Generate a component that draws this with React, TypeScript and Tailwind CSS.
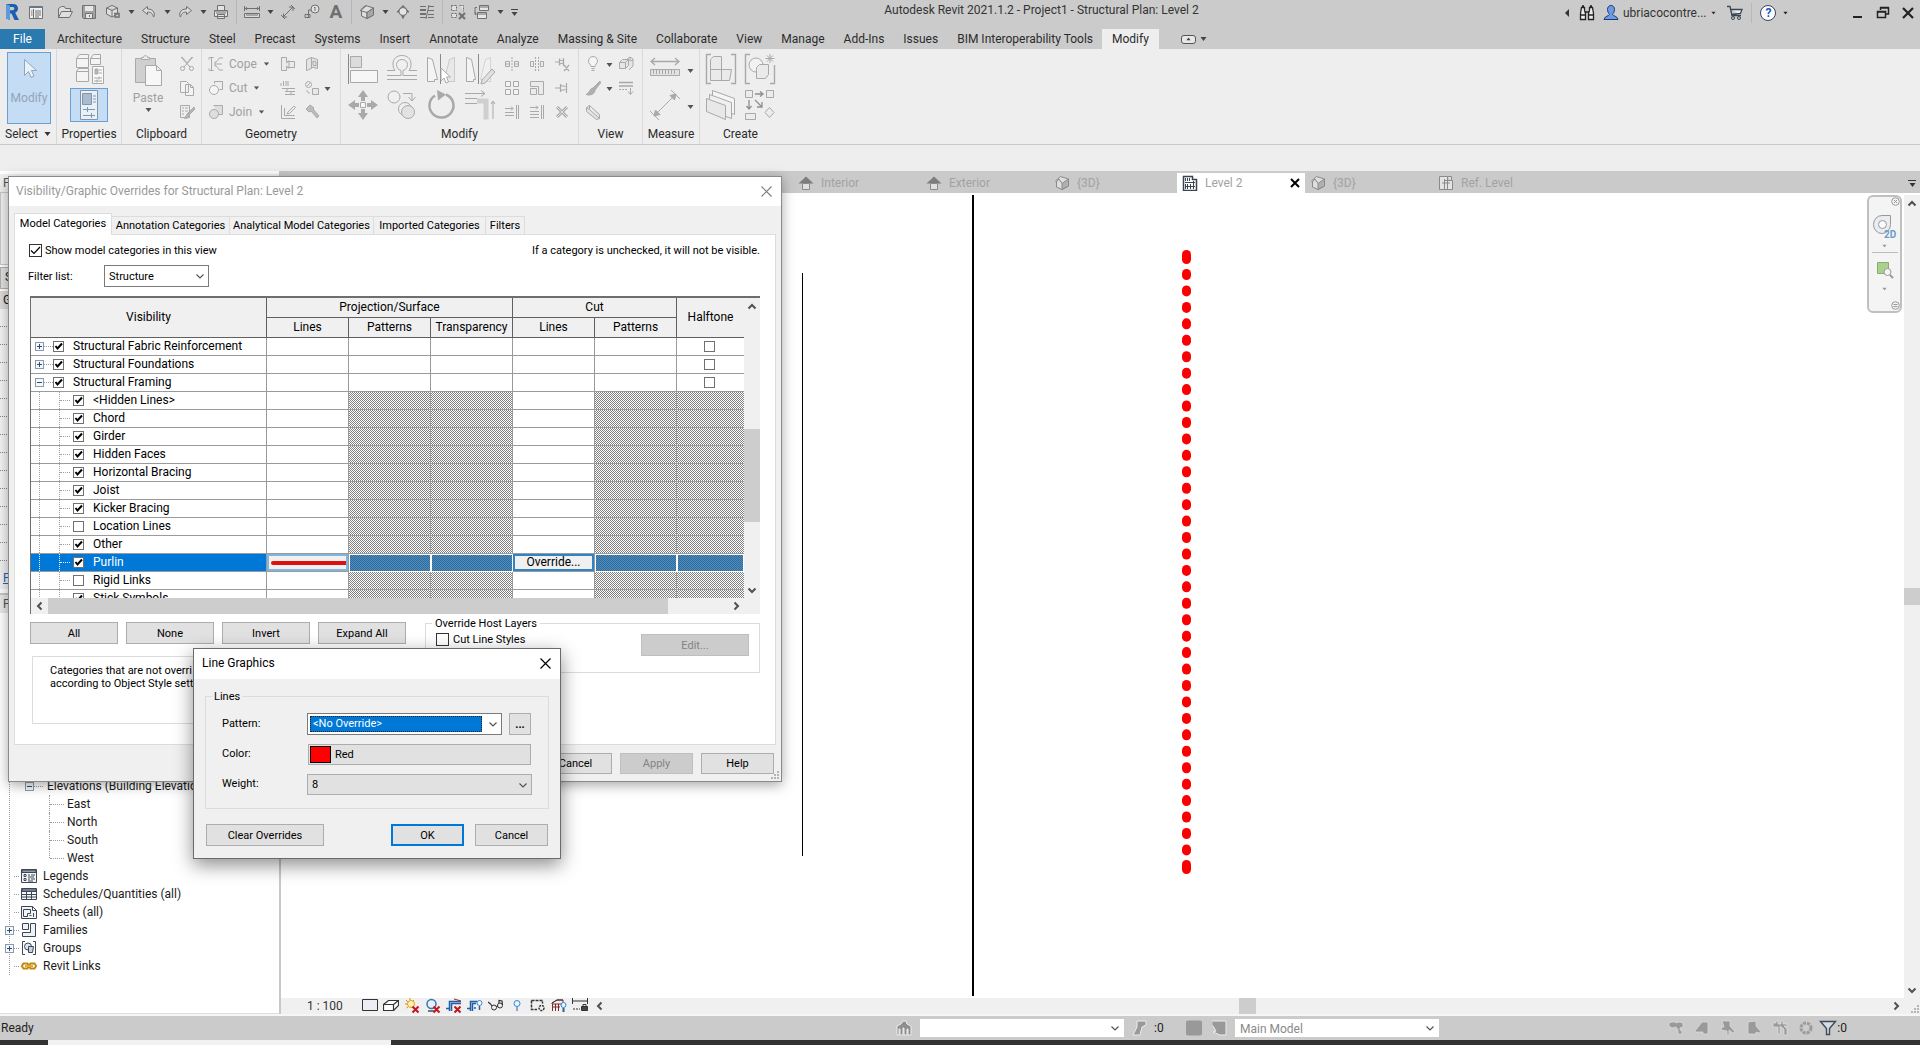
import { useState } from 'react';
import type { ReactNode } from 'react';

type IconProps = { s?: number; vb?: number; className?: string; children: ReactNode };

// Base line icon, strokes follow the text colour
function Ic({ s = 16, vb = 16, className = '', children }: IconProps) {
  return (
    <svg
      width={s}
      height={s}
      viewBox={`0 0 ${vb} ${vb}`}
      fill="none"
      stroke="currentColor"
      strokeWidth={1}
      aria-hidden="true"
      className={`shrink-0 ${className}`}
    >
      {children}
    </svg>
  );
}

function Caret({ className = '' }: { className?: string }) {
  return (
    <svg width="7" height="4" viewBox="0 0 7 4" aria-hidden="true" className={`shrink-0 ${className}`}>
      <path d="M0.5 0h6L3.5 4z" fill="currentColor" />
    </svg>
  );
}

const ARROWS = {
  up: 'M1.5 6.5L5 3l3.5 3.5',
  down: 'M1.5 3.5L5 7l3.5-3.5',
  left: 'M6.5 1.5L3 5l3.5 3.5',
  right: 'M3.5 1.5L7 5L3.5 8.5',
};

function Chevron({ dir = 'down', bold = false }: { dir?: keyof typeof ARROWS; bold?: boolean }) {
  return (
    <svg width="10" height="10" viewBox="0 0 10 10" fill="none" stroke="#505050" strokeWidth={bold ? 2 : 1.1} aria-hidden="true" className="shrink-0">
      <path d={ARROWS[dir]} />
    </svg>
  );
}

/* ---------- Title bar ---------- */

const QAT: Record<string, ReactNode> = {
  logo: (
    <Ic s={18} vb={18}>
      <path d="M3 1h7c3.500 0 5 1.800 5 4.500 0 2-1 3.500-2.800 4.200L16 17h-4.500L8.500 10.500H7V17l-4-1.500z" fill="#1b5fae" stroke="none" />
      <path d="M3 1l4 1.500V17l-4-1.500z" fill="#5b9bdc" stroke="none" />
      <path d="M7 4h2.500c1.200 0 1.800.6 1.800 1.600S10.700 7.300 9.500 7.300H7z" fill="#cbcbcb" stroke="none" />
    </Ic>
  ),
  props: (
    <Ic>
      <path d="M1.500 2.500h13v12h-13z" fill="#efefef" />
      <path d="M1.500 3.500h13M5.500 5v9.500M3 7h1.500M3 9h1.500M3 11h1.500M7 7h6M7 9h6M7 11h6M7 13h4" />
      <path d="M2 2h12v2H2z" fill="#6b7683" stroke="none" />
    </Ic>
  ),
  open: (
    <Ic>
      <path d="M1.500 13.500v-9l3-2h3l1 2h5v3M1.500 13.500l3-6h11l-3 6z" fill="#dedede" />
    </Ic>
  ),
  save: (
    <Ic>
      <path d="M1.500 1.500h13v13h-12l-1-1z" fill="#a2a2a2" />
      <path d="M4 2h8v5H4z" fill="#e6e6e6" stroke="none" />
      <path d="M4.500 14V9.500h7V14M8.500 11v2" fill="#e6e6e6" />
    </Ic>
  ),
  sync: (
    <Ic>
      <path d="M7 1.500l5.500 2.500v6L7 13 1.500 10V4zM1.500 4L7 6.500 12.500 4M7 6.500V13" fill="#dedede" />
      <path d="M9 9.500h5v2.500M15 13h-5v-2.500" strokeWidth="1.500" />
    </Ic>
  ),
  undo: (
    <Ic>
      <path d="M6.500 2.500L1.500 6.500l5 4V8c3 0 5 1 6 5 .8-1 1-2.500.6-4C12.400 6.400 10 5 6.500 5z" fill="#dcdcdc" />
    </Ic>
  ),
  redo: (
    <Ic>
      <path d="M9.500 2.500l5 4-5 4V8c-3 0-5 1-6 5-.8-1-1-2.500-.6-4C3.600 6.400 6 5 9.500 5z" fill="#dcdcdc" />
    </Ic>
  ),
  print: (
    <Ic>
      <path d="M4.500 6V1.500h7V6M1.500 6.500h13v6h-13zM4.500 10.500h7v4h-7z" fill="#e2e2e2" />
      <path d="M2 7h12M3 9h10" />
    </Ic>
  ),
  measure: (
    <Ic>
      <path d="M.5 2v5M15.500 2v5M1 4.500h14M3 3L1.500 4.500 3 6M13 3l1.500 1.500L13 6" />
      <path d="M.5 9.500h15v4H.5zM3 10v2M5 10v2M7 10v2M9 10v2M11 10v2M13 10v2" fill="#dcdcdc" />
    </Ic>
  ),
  dim: (
    <Ic>
      <path d="M3 13L13 3M1 11l4 4M11 1l4 4M3.500 9.500V13H7M9 3h4v4" />
    </Ic>
  ),
  tag: (
    <Ic>
      <circle cx="11" cy="5" r="4" fill="#e2e2e2" />
      <path d="M11 3v4M10 4l1-1M7 6H4.500v7M1 10.500h5v3H1z" />
    </Ic>
  ),
  text: <span className="text-[19px] leading-5 font-bold text-[#6f6f6f]">A</span>,
  house: (
    <Ic>
      <path d="M1.500 6l5-4.500L14.500 4v7L8 14.500 2.500 12V7zM8 14.500V8.500L14.500 4M2.500 7L8 8.500M1 7l6-5" fill="#dedede" />
      <path d="M8 8.500L14.500 4v7L8 14.500z" fill="#a8a8a8" />
    </Ic>
  ),
  section: (
    <Ic>
      <path d="M2 8l6-6.500L14 8h-3L8 14.500 5 8z" fill="#666" />
      <circle cx="8" cy="7.500" r="4" fill="#e4e4e4" />
    </Ic>
  ),
  thin: (
    <Ic>
      <path d="M1 2.500h6M1 13.500h6" />
      <path d="M1 6h6M1 10h6" strokeWidth="2" />
      <path d="M9 2.500h6M9 6.500h6M9 10.500h6M9 13.500h6M10 1L7 15" />
    </Ic>
  ),
  closeHidden: (
    <Ic>
      <path d="M1.500 1.500h5v5h-5zM9.500 1.500h4v6M1.500 9.500h5v4h-5z" fill="#e0e0e0" strokeDasharray="2 1" />
      <path d="M9 9l6 6M15 9l-6 6" strokeWidth="2" />
    </Ic>
  ),
  switchWin: (
    <Ic>
      <path d="M5.500 1.500h9v5h-9zM3.500 8.500h9v6h-9z" fill="#e6e6e6" />
      <path d="M5.500 3h9M3.500 10h9M3 3.500H1v7h1M1 8l1.500 2.500" />
    </Ic>
  ),
};

// '-' is a divider, 'v' is a drop-down caret
const QAT_ITEMS = [
  'open', 'save', 'sync', 'v', 'undo', 'v', 'redo', 'v', 'print', '-', 'measure', 'v', 'dim', 'tag', 'text', '-',
  'house', 'v', 'section', 'thin', '-', 'closeHidden', 'switchWin', 'v',
];

function QatButton({ name }: { name: string }) {
  return (
    <button aria-label={name} className="flex w-6 items-center justify-center">
      {QAT[name]}
    </button>
  );
}

function TitleBar() {
  return (
    <header className="flex h-[29px] items-stretch bg-[#cbcbcb] text-[#707070]">
      <div className="flex h-6 w-[527px] shrink-0 items-stretch">
        <QatButton name="logo" />
        <QatButton name="props" />
        <span className="w-[5px]" />
        {QAT_ITEMS.map((item, i) => {
          if (item === 'v') {
            return (
              <button key={i} aria-label="More" className="flex w-3 items-center justify-center text-[#444]">
                <Caret />
              </button>
            );
          }
          if (item === '-') {
            return <span key={i} className="ml-[3px] w-1 border-l border-[#b5b5b5]" />;
          }
          return <QatButton key={i} name={item} />;
        })}
        <button aria-label="Customize" className="flex w-4 flex-col items-center justify-center gap-[2px] text-[#444]">
          <span className="h-px w-[7px] bg-[#444]" />
          <Caret />
        </button>
      </div>
      <h1 className="flex-1 pt-[2px] text-center text-[12px] leading-4 text-[#333]">
        Autodesk Revit 2021.1.2 - Project1 - Structural Plan: Level 2
      </h1>
      <div className="flex h-[25px] w-[364px] shrink-0 items-center pl-[9px] text-[#222]">
        <svg width="4" height="8" viewBox="0 0 4 8" aria-hidden="true"><path d="M4 0v8L0 4z" fill="#333" /></svg>
        <button aria-label="Search" className="ml-[10px]">
          <Ic>
            <path d="M2.500 2.500h3v3l1 3v6h-5v-6zM10.500 2.500h3l1 6v6h-5v-6l1-3zM6.500 7h3M1.500 10h5M9.500 10h5M3 1h2M11 1h2" fill="#ececec" strokeWidth="1.300" />
          </Ic>
        </button>
        <button className="ml-2 flex items-center text-[12px] text-[#333]">
          <Ic className="text-[#1d3b6e]">
            <path d="M8 .5c2.500 0 3.500 2 3.500 4S10 9 9.500 9.500c.3 1.500 5 1.500 5.500 5H1c.5-3.500 5.200-3.500 5.500-5C6 9 4.500 6.500 4.500 4.500s1-4 3.500-4z" fill="#6e9be8" />
          </Ic>
          <span className="ml-1">ubriacocontre...</span>
          <Caret className="ml-1 scale-75" />
        </button>
        <button aria-label="App store" className="ml-[10px]">
          <Ic className="text-[#3a4552]">
            <path d="M0 1.500h3l2 9h9M3.500 4.500h11.500l-1.500 4-9 1" fill="#e6ebf2" strokeWidth="1.300" />
            <circle cx="6" cy="13" r="1.500" />
            <circle cx="12" cy="13" r="1.500" />
          </Ic>
        </button>
        <span className="ml-2 h-5 border-l border-[#b8b8b8]" />
        <button aria-label="Help" className="ml-2 flex size-4 items-center justify-center rounded-full border border-[#34435c] bg-white text-[12px] leading-3 font-bold text-[#1a56c4]">?</button>
        <Caret className="ml-[6px] scale-75" />
        <span className="flex-1" />
        <button aria-label="Minimize" className="flex size-[26px] items-center justify-center pt-2"><span className="h-[2px] w-[9px] bg-[#222]" /></button>
        <button aria-label="Restore" className="flex size-[26px] items-center justify-center">
          <Ic s={14} vb={14}>
            <path d="M4.500 4V2h8v6H10M4 1.500h9" strokeWidth="1.500" />
            <path d="M1.500 5.500h8v6h-8zM1 6h9" strokeWidth="1.500" />
          </Ic>
        </button>
        <button aria-label="Close" className="flex size-6 items-center justify-center">
          <Ic s={12} vb={12}><path d="M1 1l10 10M11 1L1 11" strokeWidth="2.200" /></Ic>
        </button>
      </div>
    </header>
  );
}

const RIBBON_TABS = [
  'Architecture', 'Structure', 'Steel', 'Precast', 'Systems', 'Insert', 'Annotate', 'Analyze', 'Massing & Site',
  'Collaborate', 'View', 'Manage', 'Add-Ins', 'Issues', 'BIM Interoperability Tools',
];

function RibbonTabs() {
  return (
    <nav className="flex h-5 items-stretch bg-[#cbcbcb] text-[12px] text-[#2b2b2b]">
      <button className="mr-[2px] w-[45px] bg-[#2a7ab0] text-white">File</button>
      {RIBBON_TABS.map((tab) => (
        <button key={tab} className="pr-[9px] pl-[10px] whitespace-nowrap">{tab}</button>
      ))}
      <button className="bg-[#eeeeee] px-[10px]">Modify</button>
      <button aria-label="Ribbon display" className="ml-[22px] flex items-center gap-1 text-[#444]">
        <span className="flex h-[9px] w-[15px] items-center justify-center rounded-[3px] border border-[#555] bg-[#e8e8e8]">
          <Caret className="scale-75 rotate-180" />
        </span>
        <Caret />
      </button>
    </nav>
  );
}

/* ---------- Ribbon ---------- */

const SMALL: Record<string, ReactNode> = {
  scissors: (
    <Ic>
      <path d="M2 1l9 10M14 1L5 11M3 1l5 6M13 1L8 7" />
      <circle cx="3.500" cy="12.500" r="2" />
      <circle cx="12.500" cy="12.500" r="2" />
    </Ic>
  ),
  copy: <Ic><path d="M1.500 1.500h6l2 2v9h-8zM6.500 4.500h5l3 3v8h-8zM11.500 4.500v3h3" fill="#f3f3f3" /></Ic>,
  match: (
    <Ic>
      <path d="M1.500 1.500h9v12h-9zM3 4h2M6 4h3M3 7h2M6 7h3M3 10h2" />
      <path d="M15 3L9 9l1.500 1.500L16 5zM9 9c-2 1-1 4-4 5 3 1 5.500-.5 5.500-3.500z" fill="#b5b5b5" />
    </Ic>
  ),
  cope: <Ic><path d="M1.500 1.500h4M1.500 14.500h4M3.500 1.500v13M1 1.500v2M1 12.500v2M15 2h-3c-3 0-1 4-5 4v4c4 0 2 4 5 4h3M7 8h7" /></Ic>,
  cut: <Ic><path d="M6.500 1.500h8v8h-3M6.500 1.500v2" fill="#ededed" /><circle cx="6" cy="10" r="4.500" fill="#f5f5f5" /></Ic>,
  join: <Ic><path d="M5.500 1.500h9v9h-5" fill="#dedede" /><circle cx="6" cy="10" r="4.500" fill="#dedede" /></Ic>,
  wallJoin: <Ic><path d="M1.500 1.500h5v4h8v6h-8v3h-5zM9 4.500v8M6 7l3-2M6 10l3 2" fill="#ebebeb" /></Ic>,
  beam: <Ic><path d="M1 3v3M3.500 1v5M6 1v5M8 1v5M2 8.500h13M5 11.500h10M5 14.500h10M7 8.500v3M11 11.500v3" /></Ic>,
  demolish: <Ic><path d="M1.500 1v13.500H15M4.500 4v7.500h10M8 8l6-6 1.500 1.500-6 6L7 10z" /></Ic>,
  unjoin: <Ic><path d="M2.500 3.500l5-2v11l-5 2zM7.500 1.500l6 2v9l-6-1.500M9 5l3 1v4l-3-1z" fill="#e4e4e4" /></Ic>,
  splitFace: <Ic><circle cx="4.500" cy="4.500" r="3" /><path d="M3 6l3-3M8.500 8.500h6v6h-6zM3 10c0 2 1 3 3 3" fill="#e8e8e8" /></Ic>,
  hammer: <Ic><path d="M2 5l4-4 4 3-1 1 6 7-2 2-6-7-2 1z" fill="#bdbdbd" /></Ic>,
  split: <Ic><path d="M8 1v14" strokeDasharray="2 1" /><path d="M1.500 5.500h4v5h-4zM10.500 5.500h4v5h-4zM1 8h5M10 8h5" /></Ic>,
  splitGap: <Ic><path d="M6.500 1v14M9.500 1v14" strokeDasharray="2 1" /><path d="M1.500 5.500h3v5h-3zM11.500 5.500h3v5h-3z" /></Ic>,
  unpin: <Ic><path d="M1 6h4M5.500 2.500v7M5.500 4l4 1M5.500 8l4-1M9.500 2v8M10 9l5 6M15 9l-5 6" strokeWidth="1.200" /></Ic>,
  array: <Ic><path d="M1.500 1.500h5v5h-5zM9.500 1.500h5v5h-5zM1.500 9.500h5v5h-5zM9.500 9.500h5v5h-5z" fill="#f3f3f3" /></Ic>,
  scale: <Ic><path d="M1.500 1.500h13v13h-5v-8h-8zM1.500 8.500h6v6h-6z" fill="#ebebeb" /></Ic>,
  pin: <Ic><path d="M1 8h5M6.500 4v8M6.500 5.500l5 1M6.500 10.500l5-1M12.500 3v10" strokeWidth="1.200" /></Ic>,
  trim1: <Ic><path d="M1 4.500h8M7 2.500l2 2-2 2M1 8.500h9M1 11.500h9M12.500 1v14M14.500 1v14" /></Ic>,
  trim2: <Ic><path d="M1 3.500h8M7 1.500l2 2-2 2M1 7.500h9M1 10.500h9M1 13.500h9M12.500 1v14M14.500 1v14" /></Ic>,
  del: <Ic><path d="M3 3l10 10M13 3L3 13" strokeWidth="3" /><path d="M3 3l10 10M13 3L3 13" stroke="#e3e3e3" /></Ic>,
  bulb: <Ic><path d="M6 10.500c0-2-2.500-3-2.500-5.500a4.500 4.500 0 019 0c0 2.500-2.500 3.500-2.500 5.500zM6.500 12.500h3M6.500 14.500h3" fill="#f5f5f5" /></Ic>,
  boxView: <Ic><path d="M1.500 6.500h6v6h-6zM1.500 6.500l3-3h6v6l-3 3M7.500 6.500l3-3M8 4l4-3 3 2v7l-4 4M12 1v4l3-1" fill="#e6e6e6" /></Ic>,
  brush: <Ic><path d="M15 1L8 8l2 2 5.500-7zM8 8c-4 1-3 5-7 6.500C5 16 10 14 10 10z" fill="#b0b0b0" /></Ic>,
  lines: <Ic><path d="M1 2.500h14M1 6h14" strokeWidth="1.600" /><path d="M1 9.500h9" strokeDasharray="2 1" /><path d="M12.500 8v6M10 11.500l2.500 3 2.500-3" /></Ic>,
  wall: <Ic><path d="M1.500 3.500l3-2 10 9v4l-3 1-10-8zM4.500 1.500v4l10 9M1.500 3.500l3 2" fill="#e2e2e2" /></Ic>,
};

const LARGE: Record<string, ReactNode> = {
  propsTop: (
    <Ic s={32} vb={32}>
      <path d="M3.500 5.500l3-4h9v13h-12zM17.500 5.500l3-4h7v10h-10zM3.500 18.500l2-3h10v13h-12z" fill="#f4f4f4" />
      <path d="M3.500 5.500h12M17.500 5.500h10M3.500 18.500h12" />
      <path d="M19.500 13.500h11v17h-11z" fill="#fafafa" />
      <path d="M22 16h3v5h-3z" fill="#b5b5b5" />
      <path d="M26 17h3M26 20h3M21 25h8M21 28h8M26 23.500v3M24 26.500v3" />
    </Ic>
  ),
  propsBtn: (
    <Ic s={32} vb={32} className="text-[#8296ab]">
      <path d="M7.500 1.500h17v29h-17z" fill="#e8f0f8" />
      <path d="M9.500 4.500h9v11h-9z" fill="#a9bccf" />
      <path d="M20 7h3M20 10h3M20 13h3M10 20.500h12M10 26.500h12M14.500 18v5M18.500 24v5" />
    </Ic>
  ),
  paste: (
    <Ic s={32} vb={32}>
      <path d="M3.500 4.500h20v24h-20z" fill="#d0d0d0" />
      <path d="M9.500 5.500v-2h2c0-2.500 4-2.500 4 0h2v2z" fill="#eee" />
      <path d="M13.500 11.500h11l5 5v15h-16zM24.500 11.500v5h5" fill="#f7f7f7" />
    </Ic>
  ),
  align: (
    <Ic s={32} vb={32}>
      <path d="M1.500 1v30" stroke="#8a8a8a" />
      <path d="M3.500 3.500h11v11h-11z" fill="#dcdcdc" />
      <path d="M3.500 17.500h27v12h-27z" fill="#f6f6f6" />
    </Ic>
  ),
  offset: (
    <Ic s={32} vb={32}>
      <path d="M1 17.500h8c-1.500-2-2-4-2-6.500C7 5.500 11 2.500 16 2.500s9 3 9 8.500c0 2.500-.5 4.500-2 6.500h8v9H1z" fill="#f0f0f0" stroke="none" />
      <path d="M1 17.500h8c-1.500-2-2-4-2-6.500C7 5.500 11 2.500 16 2.500s9 3 9 8.500c0 2.500-.5 4.500-2 6.500h8" />
      <path d="M1 22.500h14v-5c-3-1-4.500-3-4.500-6s2.500-5 5.500-5 5.500 2 5.500 5-1.500 5-4.500 6v5h14M1 26.500h30" />
    </Ic>
  ),
  mirrorPick: (
    <Ic s={32} vb={32}>
      <path d="M2.500 4.500l5 2 5 20h-3v2h-7z" fill="#f4f4f4" />
      <path d="M29.500 4.500l-5 2-5 20h3v2h7z" fill="#e8e8e8" strokeOpacity=".5" />
      <path d="M15.500 1v30" stroke="#8a8a8a" />
      <path d="M16 15v13l3-3 2 5 2.500-1-2-5h4z" fill="#fff" />
    </Ic>
  ),
  mirrorDraw: (
    <Ic s={32} vb={32}>
      <path d="M2.500 4.500l5 2 4 20h-2v2h-7z" fill="#f4f4f4" />
      <path d="M26.500 4.500l-5 2-5 20h3v2h7z" fill="#f0f0f0" strokeOpacity=".4" />
      <path d="M14.500 1v30" stroke="#8a8a8a" />
      <path d="M28 16l3 3-10 11-4 1 1-4z" fill="#e0e0e0" />
    </Ic>
  ),
  move: (
    <Ic s={32} vb={32}>
      <path d="M16 1l5 7h-3v4h-4V8h-3zM16 31l5-7h-3v-4h-4v4h-3zM1 16l7-5v3h4v4H8v3zM31 16l-7-5v3h-4v4h4v3z" fill="#a9a9a9" stroke="none" />
      <path d="M13.500 13.500h5v5h-5z" fill="#f6f6f6" />
    </Ic>
  ),
  copyBig: (
    <Ic s={32} vb={32}>
      <circle cx="8" cy="8" r="6" fill="#f0f0f0" />
      <circle cx="19" cy="20" r="6.500" fill="#f0f0f0" />
      <circle cx="22" cy="23" r="6.500" fill="#e2e2e2" />
      <path d="M17 4.500h9v7M22.500 8l3.500 4 3.500-4" />
    </Ic>
  ),
  rotate: (
    <Ic s={32} vb={32}>
      <path d="M10 6.500a12 12 0 1011-1" strokeWidth="2.500" />
      <path d="M12 1l9 4.500-8 6z" fill="#a9a9a9" stroke="none" />
    </Ic>
  ),
  trimCorner: (
    <Ic s={32} vb={32}>
      <path d="M1 4.500h20M17 1.500l4 3-4 3" />
      <path d="M1 9.500h12M1 14.500h12" />
      <path d="M13 9.500h11.500v21h-5v-16h-6.500z" fill="#cfcfcf" stroke="none" />
      <path d="M29 30V12M27 15l2-3 2 3" />
    </Ic>
  ),
  ruler: (
    <Ic s={32} vb={32}>
      <path d="M2 8.500h28M6 5L2 8.500 6 12M26 5l4 3.500L26 12" strokeWidth="1.300" />
      <path d="M1.500 16.500h29v6h-29zM4.500 17v4M7.500 17v4M10.500 17v4M13.500 17v4M16.500 17v4M19.500 17v4M22.500 17v4M25.500 17v4" fill="#e2e2e2" />
    </Ic>
  ),
  dimBig: (
    <Ic s={32} vb={32}>
      <path d="M5 27L27 5M1 22l9 9M22 1l9 9" />
      <path d="M27 5l-1.500 6L21 6.500zM5 27l1.500-6L11 25.500z" fill="#a9a9a9" />
    </Ic>
  ),
  assembly: (
    <Ic s={32} vb={32}>
      <path d="M6 1.500H1.500v29H6M26 1.500h4.500v29H26" strokeWidth="1.400" />
      <path d="M5.500 6.500l3-3h8v13h10l-2 11h-19zM5.500 16.500h11M16.500 16.500v11" fill="#eaeaea" />
    </Ic>
  ),
  group: (
    <Ic s={32} vb={32}>
      <path d="M6 1.500H1.500v29H6M26 30.500h4.500V12" strokeWidth="1.400" />
      <circle cx="12" cy="12" r="7" fill="#f2f2f2" />
      <path d="M12.500 14.500l3-3h9v10l-3 4h-9zM26 1v9M21.500 5.500h9M23 2.500l6 6M29 2.500l-6 6" fill="#eaeaea" />
    </Ic>
  ),
  parts: (
    <Ic s={32} vb={32}>
      <path d="M7.500 1.500l22 8v16l-22-8z" fill="#f5f5f5" />
      <path d="M4.500 5.500l22 8v16l-22-8z" fill="#efefef" />
      <path d="M1.500 9.500l19 7v14l-19-8z" fill="#e8e8e8" />
    </Ic>
  ),
  similar: (
    <Ic s={32} vb={32}>
      <path d="M1.500 1.500h7v7h-7zM22.500 1.500h7v7h-7zM1.500 24.500h10v6h-10zM25.500 18.500l4.500 5-4.500 5-4.500-5z" fill="#ececec" />
      <path d="M11 5h8M16 2.500L19 5l-3 2.500M5 11v9M2.500 17L5 20l2.500-3M11 11l7 7M18 13v5h-5" stroke="#8f8f8f" strokeWidth="1.300" />
    </Ic>
  ),
};

function SmallGrid({ items, cols }: { items: string[]; cols: string }) {
  return (
    <div className={`grid auto-rows-[24px] content-start pt-[3px] ${cols}`}>
      {items.map((item) => (
        <button key={item} aria-label={item} className="flex items-center justify-center">{SMALL[item]}</button>
      ))}
    </div>
  );
}

function LargeGrid({ items, cols }: { items: string[]; cols: string }) {
  return (
    <div className={`grid auto-rows-[36px] content-start pt-[2px] ${cols}`}>
      {items.map((item) => (
        <button key={item} aria-label={item} className="flex items-center justify-center">{LARGE[item]}</button>
      ))}
    </div>
  );
}

function Panel({ title, width, children }: { title: ReactNode; width: string; children: ReactNode }) {
  return (
    <section className={`flex shrink-0 flex-col border-r border-[#d9d9d9] ${width}`}>
      <div className="flex h-[77px] text-[#a9a9a9]">{children}</div>
      <h2 className="flex items-center justify-center gap-[6px] text-[12px] leading-4 text-[#2b2b2b]">{title}</h2>
    </section>
  );
}

function GeometryTool({ icon, label }: { icon: string; label: string }) {
  return (
    <button className="flex h-6 items-center text-[12px] text-[#a0a0a0]">
      <span className="text-[#a9a9a9]">{SMALL[icon]}</span>
      <span className="mr-[6px] ml-[5px]">{label}</span>
      <Caret className="scale-90 text-[#555]" />
    </button>
  );
}

function Ribbon() {
  return (
    <div className="flex h-24 border-b border-[#c9c9c9] bg-[#eeeeee]">
      <Panel width="w-[57px]" title={<>Select <Caret className="text-[#333]" /></>}>
        <button className="mt-[3px] ml-[7px] flex h-[72px] w-[44px] flex-col items-center border border-[#6a9fd4] bg-[#c4dcf4] pt-1 text-[12px] text-[#93a5b8]">
          <Ic s={24} vb={24}>
            <path d="M7.500 2.500v16l4-4 2.500 6 3-1.500-2.500-5.500h5z" fill="#e9f2fb" />
          </Ic>
          <span className="mt-2">Modify</span>
        </button>
      </Panel>
      <Panel width="w-[65px]" title="Properties">
        <div className="flex w-full flex-col items-center gap-[3px] pt-1">
          <button aria-label="Type properties">{LARGE.propsTop}</button>
          <button aria-label="Properties" className="flex h-[34px] w-[38px] items-center justify-center border border-[#6a9fd4] bg-[#c4dcf4]">{LARGE.propsBtn}</button>
        </div>
      </Panel>
      <Panel width="w-[80px]" title="Clipboard">
        <button className="flex w-[52px] flex-col items-center pt-[5px] text-[12px] text-[#a0a0a0]">
          <span className="text-[#a9a9a9]">{LARGE.paste}</span>
          <span className="mt-1 leading-4">Paste</span>
          <Caret className="mt-[2px] text-[#555]" />
        </button>
        <SmallGrid cols="grid-cols-[26px]" items={['scissors', 'copy', 'match']} />
      </Panel>
      <Panel width="w-[139px]" title="Geometry">
        <div className="w-[74px] pt-[3px] pl-[6px]">
          <GeometryTool icon="cope" label="Cope" />
          <GeometryTool icon="cut" label="Cut" />
          <GeometryTool icon="join" label="Join" />
        </div>
        <SmallGrid cols="grid-cols-[24px_24px]" items={['wallJoin', 'unjoin', 'beam', 'splitFace', 'demolish', 'hammer']} />
        <Caret className="mt-[38px] text-[#555]" />
      </Panel>
      <Panel width="w-[238px]" title="Modify">
        <LargeGrid cols="grid-cols-[39px_39px_39px_39px] pl-[2px]" items={['align', 'offset', 'mirrorPick', 'mirrorDraw', 'move', 'copyBig', 'rotate', 'trimCorner']} />
        <SmallGrid cols="grid-cols-[25px_25px_25px]" items={['split', 'splitGap', 'unpin', 'array', 'scale', 'pin', 'trim1', 'trim2', 'del']} />
      </Panel>
      <Panel width="w-16" title="View">
        <SmallGrid cols="grid-cols-[26px] pl-px" items={['bulb', 'brush', 'wall']} />
        <div className="flex flex-col gap-5 pt-[14px] text-[#555]">
          <Caret />
          <Caret />
        </div>
        <SmallGrid cols="grid-cols-[25px]" items={['boxView', 'lines']} />
      </Panel>
      <Panel width="w-[57px]" title="Measure">
        <LargeGrid cols="grid-cols-[44px]" items={['ruler', 'dimBig']} />
        <div className="flex flex-col gap-8 pt-5 text-[#555]">
          <Caret />
          <Caret />
        </div>
      </Panel>
      <Panel width="w-[82px] border-transparent" title="Create">
        <LargeGrid cols="grid-cols-[39px_39px] pl-px" items={['assembly', 'group', 'parts', 'similar']} />
      </Panel>
    </div>
  );
}

/* ---------- Left palettes ---------- */

function ExpandBox({ open = false }: { open?: boolean }) {
  return (
    <svg width="9" height="9" viewBox="0 0 9 9" aria-hidden="true" className="relative shrink-0">
      <rect x=".5" y=".5" width="8" height="8" fill="#f4f7fb" stroke="#8c9aa8" />
      <path d={open ? 'M2 4.500h5' : 'M2 4.500h5M4.500 2v5'} stroke="#2c4a7c" />
    </svg>
  );
}

const TREE_ICONS: Record<string, ReactNode> = {
  Legends: (
    <Ic>
      <path d="M.5 1.500h15v13H.5z" fill="#f2f5f8" />
      <path d="M1 2h14v2.500H1z" fill="#8d99a6" />
      <path d="M3 6.500h2v2H3zM3 10.500h2v2H3zM7 7h2M10 7h4M7 9h6M7 11h2M10 11h4M7 13h5" />
    </Ic>
  ),
  'Schedules/Quantities (all)': (
    <Ic>
      <path d="M.5 2.500h15v11H.5z" fill="#f5f7fa" />
      <path d="M1 3h14v2H1z" fill="#aab4bf" />
      <path d="M.5 5.500h15M.5 8.500h15M.5 11h15M5.500 5v8.500M10.500 5v8.500" />
    </Ic>
  ),
  'Sheets (all)': (
    <Ic>
      <path d="M.5 2.500h11l4 4v8H.5zM11.500 2.500v4h4" fill="#f2f5f8" />
      <path d="M2.500 5.500h7v4h-3v3h-4zM8.500 11.500h2M12.500 9v4" />
    </Ic>
  ),
  Families: <Ic><path d="M1.500 1.500h6v6h-6zM9.500 1.500h5v13h-13v-4h8z" fill="#eef1f5" /></Ic>,
  Groups: (
    <Ic>
      <path d="M4 1.500H1.500v13H4M12 1.500h2.500v13H12" />
      <circle cx="7" cy="6.500" r="3.500" fill="#dfe6ee" />
      <path d="M7.500 6.500h5l-1 6h-4z" fill="#c8d2dd" />
    </Ic>
  ),
  'Revit Links': (
    <Ic className="text-[#c08a10]">
      <path d="M2.500 5.500h4l1.500 2.500-1.500 2.500h-4L.8 8zM9.500 5.500h4L15.200 8l-1.700 2.500h-4L8 8zM4 8h8" strokeWidth="2" />
      <path d="M4 8h8" stroke="#f5d15a" />
    </Ic>
  ),
};

const TREE_ROOTS = [
  { label: 'Legends' },
  { label: 'Schedules/Quantities (all)' },
  { label: 'Sheets (all)' },
  { label: 'Families', box: true },
  { label: 'Groups', box: true },
  { label: 'Revit Links' },
];

// Only the outer edge of the Properties palette stays clear of the open dialog
function LeftPalettes() {
  return (
    <aside className="flex w-[281px] shrink-0 flex-col border-r-2 border-[#c8c8c8] bg-white text-[12px] leading-[18px] text-[#1a1a1a]">
      <h2 title="Properties" className="mt-[3px] h-[18px] bg-[#f0f0f0] pl-[3px] text-[#555]">P</h2>
      <div className="h-[73px] border border-[#c8c8c8] bg-[#f0f0f0]" />
      <div title="Structural Plan" className="mt-[2px] h-[22px] border border-[#b0b0b0] bg-[#e1e1e1] pl-1">S</div>
      <div title="Graphics" className="mt-[2px] h-[18px] bg-[#dcdcdc] pl-[3px]">G</div>
      {Array.from({ length: 14 }, (_, i) => (
        <div key={i} className="h-[18px] border-b border-dotted border-[#888] bg-[#f5f5f5]" />
      ))}
      <div className="h-7 bg-[#f0f0f0] pt-2 pl-[3px]"><a href="#help" title="Properties help" className="text-[#2d5fb3] underline">P</a></div>
      <div title="Project Browser" className="mt-1 h-5 border-t-2 border-[#c8c8c8] bg-[#e8e8e8] pl-[3px] text-[#555]">P</div>
      <ul className="relative flex-1 border-b border-[#dedede] pl-px">
        <li className="h-[164px]" />
        <li aria-hidden="true" className="absolute top-2 bottom-[38px] left-[9px] border-l border-dotted border-[#9a9a9a]" />
        <li className="flex h-[18px] items-center pl-6">
          <ExpandBox open />
          <span className="w-[9px] border-t border-dotted border-[#9a9a9a]" />
          <span className="ml-1">Elevations (Building Elevatio</span>
        </li>
        {['East', 'North', 'South', 'West'].map((name) => (
          <li key={name} className="flex h-[18px] pl-12">
            <span className={`border-l border-dotted border-[#9a9a9a] ${name === 'West' ? 'h-[9px]' : ''}`} />
            <span className="mt-[9px] w-[14px] border-t border-dotted border-[#9a9a9a]" />
            <span className="ml-[3px]">{name}</span>
          </li>
        ))}
        {TREE_ROOTS.map(({ label, box }) => (
          <li key={label} className="flex h-[18px] items-center pl-1">
            {box ? <ExpandBox /> : <span className="w-[9px]" />}
            <span className="mr-[2px] w-[5px] border-t border-dotted border-[#9a9a9a]" />
            <span className="text-[#3c4654]">{TREE_ICONS[label]}</span>
            <span className="ml-[6px]">{label}</span>
          </li>
        ))}
      </ul>
    </aside>
  );
}

/* ---------- Drawing area ---------- */

const elevationIcon = <Ic><path d="M8 1.500L.5 8.500h15z" fill="#7d7d7d" stroke="none" /><path d="M4.500 8.500h7v6h-7z" fill="#e0e0e0" /></Ic>;
const cubeIcon = (
  <Ic>
    <path d="M1.500 6l5-4.500L14.500 4v7L8 14.500 2.500 12V7z" fill="#dedede" />
    <path d="M8 8.500L14.500 4v7L8 14.500z" fill="#b0b0b0" />
    <path d="M2.500 7L5 4l3 4.500" />
  </Ic>
);
const planIcon = (
  <Ic className="text-[#3a4552]">
    <path d="M1.500 1.500h9v3h4v11h-13z" fill="#fff" strokeWidth="1.500" />
    <path d="M3.500 3v3M5.500 3v3M7.500 3v3M3 7.500h10M3.500 9v5M5.500 9v5M8.500 9v5M11.500 6v8M3 11.500h10" />
  </Ic>
);
const refIcon = (
  <Ic>
    <path d="M1.500 1.500h8v13h-8zM6.500 5.500h8v9h-8zM9.500 1.500h4v4" fill="#e4e4e4" />
    <path d="M6.500 4v10M4 8h9" strokeDasharray="2 1" />
  </Ic>
);

const VIEW_TABS = [
  { label: 'Interior', icon: elevationIcon },
  { label: 'Exterior', icon: elevationIcon },
  { label: '{3D}', icon: cubeIcon },
  { label: 'Level 2', icon: planIcon, active: true },
  { label: '{3D}', icon: cubeIcon },
  { label: 'Ref. Level', icon: refIcon },
];

function ViewTabs() {
  return (
    <nav className="flex h-[22px] shrink-0 bg-[#cacaca] pl-[512px] text-[12px]">
      {VIEW_TABS.map((tab, i) => (
        <button
          key={i}
          className={`mt-[2px] flex w-32 shrink-0 items-center gap-[7px] pr-1 pl-[5px] text-[#a2a2a2] ${tab.active ? 'bg-white' : ''}`}
        >
          <span className="text-[#8a8a8a]">{tab.icon}</span>
          <span>{tab.label}</span>
          {tab.active && (
            <Ic s={12} vb={12} className="ml-auto text-black"><path d="M2 2l8 8M10 2l-8 8" strokeWidth="2" /></Ic>
          )}
        </button>
      ))}
      <button aria-label="Open views" className="mt-[2px] ml-auto flex w-4 flex-col items-center justify-center gap-[2px] text-[#333]">
        <span className="h-px w-2 bg-[#333]" />
        <Caret />
      </button>
    </nav>
  );
}

// Purlin symbol drawn as thick red dashes
function PurlinLine() {
  return (
    <g fill="#fa0000">
      <rect x="901" y="57" width="9" height="14" rx="4.500" />
      {Array.from({ length: 36 }, (_, i) => (
        <rect key={i} x="901" y={76 + i * 16.44} width="9" height="11" rx="4.500" />
      ))}
      <rect x="901" y="667" width="9" height="14" rx="4.500" />
    </g>
  );
}

const NAV_BOX = 'absolute top-[2px] right-[2px] flex h-[118px] w-[35px] flex-col items-center rounded-md border-2 border-[#c0c0c0] bg-[#f4f4f4] text-[#999]';

function DrawingArea() {
  return (
    <div className="relative min-w-0 flex-1 overflow-hidden">
      <svg className="absolute inset-0 h-full w-full" aria-label="Level 2 plan">
        <rect x="521" y="80" width="1" height="583" fill="#000" />
        <rect x="691" y="2" width="2" height="801" fill="#000" />
        <PurlinLine />
      </svg>
      <div className={NAV_BOX}>
        <button aria-label="Close bar" className="self-end">
          <Ic s={9} vb={9}><circle cx="4.500" cy="4.500" r="3.800" /><path d="M3 3l3 3M6 3L3 6" /></Ic>
        </button>
        <button aria-label="Steering wheel 2D" className="mt-2 flex items-end">
          <Ic s={26} vb={26}>
            <path d="M10 1.500h8.500v9a8.500 9 0 11-8.500-9z" fill="#e9ecf0" />
            <circle cx="10.500" cy="10.500" r="4" fill="#fafafa" />
            <text x="12" y="24" fontSize="10" fontWeight="bold" fill="#6b9bc9" stroke="none">2D</text>
          </Ic>
        </button>
        <Caret className="mt-1 scale-75" />
        <span className="mt-1 w-[26px] border-t border-[#bbb]" />
        <button aria-label="Zoom region" className="mt-2">
          <Ic s={18} vb={18}>
            <path d="M1.500 1.500h11v11h-11z" fill="#a9d18e" stroke="#86ad6e" />
            <circle cx="11.500" cy="11" r="3.500" fill="#f4f4f4" />
            <path d="M14 14l3 3" strokeWidth="2" />
          </Ic>
        </button>
        <Caret className="mt-2 scale-75" />
        <button aria-label="Bar options" className="mt-auto mb-px self-end">
          <Ic s={9} vb={9}><circle cx="4.500" cy="4.500" r="3.800" /><path d="M2.500 3.500h4M2.500 5.500h4" /></Ic>
        </button>
      </div>
    </div>
  );
}

function RedX() {
  return <path d="M8.500 8.500l6 6M14.500 8.500l-6 6" stroke="#c8141c" strokeWidth="2" />;
}

const VIEW_CONTROLS: [string, ReactNode][] = [
  ['Detail level', <Ic><path d="M.5 1.500h15v11H.5z" fill="#eceef3" /></Ic>],
  ['Visual style', <Ic><path d="M.5 6.500h10v6H.5zM.5 6.500l5-4h10v5l-5 5M10.500 6.500l5-4" fill="#fff" strokeWidth="1.200" /></Ic>],
  ['Sun path', <Ic><path d="M6 0v2M1 6h2M2 2l2 2M10 2L9 3M2.500 10L4 9" stroke="#d98b00" /><circle cx="7" cy="6" r="3.500" fill="#fff3c4" stroke="#e0a010" /><RedX /></Ic>],
  ['Shadows', <Ic><circle cx="6.500" cy="6" r="4.500" fill="#e8f1fa" stroke="#2f78b5" strokeWidth="1.500" /><path d="M3 13h6" strokeWidth="2" stroke="#777" /><RedX /></Ic>],
  ['Crop view', <Ic><path d="M3.500 13V3.500H15M0 10.500h3M5.500 13V5.500H15" stroke="#1d5fa8" strokeWidth="1.500" /><path d="M8 1l7 2" stroke="#9e2a2a" /><RedX /></Ic>],
  ['Crop region', <Ic><path d="M3.500 13V3.500H10M0 10.500h3M5.500 13V5.500H9" stroke="#1d5fa8" strokeWidth="1.500" /><circle cx="12.500" cy="5" r="2.500" fill="#fff" stroke="#2f88d8" /><path d="M12.500 8v4M7 10h2" stroke="#2f5f98" strokeWidth="1.500" /></Ic>],
  ['Hide', <Ic><circle cx="6" cy="9.500" r="2.500" /><circle cx="12" cy="7.500" r="2.500" /><path d="M0 4l2.500 2L4 8M8.500 9L10 7.500M11 5V2.500l3 .5.5 4" strokeWidth="1.200" /></Ic>],
  ['Reveal hidden', <Ic><circle cx="8" cy="5.500" r="3" fill="#eaf4ff" stroke="#2f88d8" /><path d="M7 10h2M7 12h2" stroke="#2f5f98" /></Ic>],
  ['Temporary properties', <Ic><path d="M1.500 2.500h11v3M1.500 2.500v9H7" strokeWidth="1.500" strokeDasharray="3 1" /><circle cx="11.500" cy="10" r="2.500" strokeWidth="1.500" strokeDasharray="2 1" /></Ic>],
  ['Analytical model', <Ic><path d="M1 5l5-3h6v4H1zM1.500 6v7M4.500 6v7M7.500 6v7M1 9h8" stroke="#7e2c2c" /><path d="M1 5l5-3h6" stroke="#333" /><circle cx="12.500" cy="7" r="2.500" fill="#eaf4ff" stroke="#2f88d8" /><path d="M12.500 10v4" stroke="#2f5f98" strokeWidth="2" /></Ic>],
  ['Constraints', <Ic><path d="M.5 0v6M15.500 0v6M1 3h14" /><path d="M1 11h7" strokeDasharray="2 1" /><path d="M9.500 8.500h6v4h-6z" fill="#444" /><path d="M11 8V6.500h3V8" /></Ic>],
];

function ViewControlBar() {
  return (
    <div className="flex h-4 shrink-0 bg-[#f0f0f0]">
      <div className="flex w-[310px] shrink-0 items-center text-[#333]">
        <button className="mr-[18px] ml-[26px] w-[34px] text-[12px] leading-[14px] whitespace-nowrap">1 : 100</button>
        {VIEW_CONTROLS.map(([label, icon]) => (
          <button key={label} aria-label={label} className="flex w-[21px] justify-center">{icon}</button>
        ))}
      </div>
      <button aria-label="Scroll left" className="flex w-[17px] items-center justify-center"><Chevron dir="left" bold /></button>
      <span className="flex-1" />
      <span className="w-[17px] bg-[#cdcdcd]" />
      <span className="flex-1" />
      <button aria-label="Scroll right" className="flex w-[17px] items-center justify-center"><Chevron dir="right" bold /></button>
      <span className="flex w-4 items-end justify-end"><Grip /></span>
    </div>
  );
}

function Grip() {
  return (
    <svg width="9" height="9" viewBox="0 0 9 9" fill="#b5b5b5" aria-hidden="true">
      <path d="M6 0h2v2H6zM6 3h2v2H6zM6 6h2v2H6zM3 3h2v2H3zM3 6h2v2H3zM0 6h2v2H0z" />
    </svg>
  );
}

/* ---------- Status bar ---------- */

const STATUS_ICONS: ReactNode[] = [
  <path d="M1 3l3-1h3l1 1 3-1 4 1v4l-3 1v2l2 1v3h-4v-4l-2-3-4 1-3-2z" />,
  <path d="M1 11L8 2h6v12H9v-2H1z" />,
  <path d="M2 1h8v5l5 6-2 1-4-3v5H7v-4l-6-1 1-3h2z" />,
  <path d="M2 2l8-1v5l5 6-2 1-3-1v2H2z" />,
  <path d="M1 3h3V1h2v3h3V1h2v3h4v2h-3l3 3v6h-3V9L8 6v8H6V7H1z" />,
];

function StatusBar() {
  return (
    <footer className="flex h-[26px] shrink-0 items-center border-t-2 border-[#f6f6f6] bg-[#cbcbcb] text-[12px] text-[#222]">
      <span className="w-[896px] pl-px">Ready</span>
      <Ic className="text-[#ededed]"><path d="M1 6l4-2 2-3h3l1 3 4 2v9h-3V9h-1v6H8V8H7v7H4V9H3v6H1z" fill="#8f8f8f" /></Ic>
      <SelectBox label="Workset" options={['']} className="ml-2 h-[18px] w-[204px] border-white bg-white" />
      <Ic className="ml-2 text-[#ededed]"><path d="M5 1h9v4l-4 2-2 8H1l4-8z" fill="#999" /></Ic>
      <span className="ml-[6px] w-8">:0</span>
      <Ic className="text-[#999]"><rect x="0" y="1" width="16" height="14" rx="2" fill="#999" /></Ic>
      <Ic className="ml-[9px] text-[#ededed]"><path d="M1 1h14v14H9l-7-3 3-1-3-5" fill="#999" /></Ic>
      <SelectBox label="Design option" options={['Main Model']} className="ml-2 h-[18px] w-[204px] border-white bg-white text-[#8a8a8a]" />
      <div className="mr-[73px] ml-auto flex items-center">
        {STATUS_ICONS.map((shape, i) => (
          <button key={i} aria-label="Selection option" className="flex w-[26px] justify-center">
            <Ic className="text-[#e0e0e0]"><g fill="#9a9a9a" strokeWidth=".7">{shape}</g></Ic>
          </button>
        ))}
        <button aria-label="Background processes" className="flex w-[26px] justify-center">
          <Ic><circle cx="8" cy="8" r="5" stroke="#9c9c9c" strokeWidth="3" strokeDasharray="3 1" /></Ic>
        </button>
        <button className="flex items-center">
          <Ic s={18} vb={18} className="text-[#3d4a58]"><path d="M1.500 2.500h15l-6 7v6h-3v-6z" fill="#d6dde5" strokeWidth="1.400" /></Ic>
          <span>:0</span>
        </button>
      </div>
    </footer>
  );
}

/* ---------- Dialog controls ---------- */

type SelectBoxProps = { id?: string; label?: string; options: string[]; className?: string };

function SelectBox({ id, label, options, className = '' }: SelectBoxProps) {
  return (
    <span className={`relative flex items-center border ${className}`}>
      <select id={id} aria-label={label} className="h-full w-full appearance-none bg-transparent pr-5 pl-1">
        {options.map((o) => <option key={o}>{o}</option>)}
      </select>
      <span className="pointer-events-none absolute right-[3px]"><Chevron /></span>
    </span>
  );
}

type CheckProps = { id?: string; label?: string; checked?: boolean; large?: boolean };

function Check({ id, label, checked = false, large = false }: CheckProps) {
  const [on, setOn] = useState(checked);
  return (
    <span className="relative flex shrink-0 items-center justify-center">
      <input
        id={id}
        type="checkbox"
        aria-label={label}
        checked={on}
        onChange={() => setOn(!on)}
        className={`appearance-none border bg-white ${large ? 'size-[13px] border-[#333]' : 'size-[11px] border-[#707070]'}`}
      />
      {on && (
        <svg width="11" height="11" viewBox="0 0 11 11" fill="none" stroke="#000" strokeWidth={large ? 1.2 : 2} aria-hidden="true" className="pointer-events-none absolute">
          <path d={large ? 'M1 5.500l3 3L10 2' : 'M2.500 5L4.500 7.500L9 2.500'} />
        </svg>
      )}
    </span>
  );
}

function DialogButton({ children, className = '', disabled = false }: { children: ReactNode; className?: string; disabled?: boolean }) {
  const look = disabled ? 'border-[#bfbfbf] bg-[#cccccc] text-[#838383]' : 'border-[#adadad] bg-[#e1e1e1]';
  return (
    <button disabled={disabled} className={`flex items-center justify-center border ${look} ${className}`}>
      {children}
    </button>
  );
}

function CloseX({ className }: { className: string }) {
  return (
    <button aria-label="Close" className={className}>
      <Ic s={11} vb={11}><path d="M.5.5l10 10M10.500.5l-10 10" strokeWidth="1.200" /></Ic>
    </button>
  );
}

/* ---------- Visibility/Graphics dialog ---------- */

const HATCH = 'bg-[repeating-conic-gradient(#808080_0_25%,#ffffff_0_50%)] bg-size-[2px_2px]';
const HATCH_SELECTED = 'bg-[repeating-conic-gradient(#0078d7_0_25%,#808080_0_50%)] bg-size-[2px_2px] outline outline-white -outline-offset-1';

type Category = { name: string; level: 0 | 1; on: boolean; open?: boolean; selected?: boolean };

const CATEGORIES: Category[] = [
  { name: 'Structural Fabric Reinforcement', level: 0, on: true },
  { name: 'Structural Foundations', level: 0, on: true },
  { name: 'Structural Framing', level: 0, on: true, open: true },
  { name: '<Hidden Lines>', level: 1, on: true },
  { name: 'Chord', level: 1, on: true },
  { name: 'Girder', level: 1, on: true },
  { name: 'Hidden Faces', level: 1, on: true },
  { name: 'Horizontal Bracing', level: 1, on: true },
  { name: 'Joist', level: 1, on: true },
  { name: 'Kicker Bracing', level: 1, on: true },
  { name: 'Location Lines', level: 1, on: false },
  { name: 'Other', level: 1, on: true },
  { name: 'Purlin', level: 1, on: true, selected: true },
  { name: 'Rigid Links', level: 1, on: false },
  { name: 'Stick Symbols', level: 1, on: true },
];

const CELL = 'border-r border-b border-[#9a9a9a] p-0';
const HEAD = 'border-r border-b border-[#606060] bg-[#f0f0f0] p-0 font-normal';

function CategoryRow({ row }: { row: Category }) {
  const blank = row.level === 1 ? HATCH : '';
  const shaded = row.selected ? HATCH_SELECTED : blank;
  const dots = row.selected ? 'border-white' : 'border-[#a0a0a0]';
  return (
    <tr className="h-[18px]">
      <td className={`${CELL} ${row.selected ? 'bg-[#0078d7] text-white' : ''}`}>
        {row.level === 0 ? (
          <div className="flex h-[17px] items-center pl-1">
            <ExpandBox open={row.open} />
            <span className={`w-[9px] border-t border-dotted ${dots}`} />
            <Check label={row.name} checked={row.on} />
            <span className="ml-[9px]">{row.name}</span>
          </div>
        ) : (
          <div className="flex h-[17px] items-center pl-2">
            <span className={`h-full border-l border-dotted ${dots}`} />
            <span className={`ml-[19px] h-full border-l border-dotted ${dots}`} />
            <span className={`mr-[3px] w-[10px] border-t border-dotted ${dots}`} />
            <Check label={row.name} checked={row.on} />
            <span className="ml-[9px]">{row.name}</span>
          </div>
        )}
      </td>
      <td className={CELL}>
        {row.selected && (
          <button aria-label="Projection lines override" className="flex h-[17px] w-full items-center border-2 border-[#7fb4dd] bg-[#f0f0f0] pt-px pl-[2px]">
            <span className="h-1 w-full rounded-l-full bg-[#dd1111]" />
          </button>
        )}
      </td>
      <td className={`${CELL} ${shaded}`} />
      <td className={`${CELL} ${shaded}`} />
      <td className={CELL}>
        {row.selected && (
          <button className="flex h-[17px] w-full items-center justify-center border-2 border-[#2f84c8] bg-[#f0f0f0]">Override...</button>
        )}
      </td>
      <td className={`${CELL} ${shaded}`} />
      <td className={`border-b border-[#9a9a9a] p-0 ${shaded}`}>
        {row.level === 0 && <div className="flex justify-center pr-[2px]"><Check label={`${row.name} halftone`} /></div>}
      </td>
    </tr>
  );
}

function CategoryTable() {
  return (
    <div className="mt-[9px] border-t-2 border-l border-[#6e6e6e] text-[12px]">
      <div className="flex h-[300px]">
        <div className="min-w-0 flex-1 overflow-hidden">
          <table className="w-full table-fixed border-separate border-spacing-0 leading-[17px]">
            <colgroup>
              <col className="w-[236px]" />
              <col className="w-[82px]" />
              <col className="w-[82px]" />
              <col className="w-[82px]" />
              <col className="w-[82px]" />
              <col className="w-[82px]" />
              <col className="w-[67px]" />
            </colgroup>
            <thead>
              <tr className="h-5">
                <th rowSpan={2} className={HEAD}>Visibility</th>
                <th colSpan={3} className={HEAD}>Projection/Surface</th>
                <th colSpan={2} className={HEAD}>Cut</th>
                <th rowSpan={2} className="border-b border-[#606060] bg-[#f0f0f0] p-0 font-normal">Halftone</th>
              </tr>
              <tr className="h-5">
                <th className={HEAD}>Lines</th>
                <th className={HEAD}>Patterns</th>
                <th className={HEAD}>Transparency</th>
                <th className={HEAD}>Lines</th>
                <th className={HEAD}>Patterns</th>
              </tr>
            </thead>
            <tbody>
              {CATEGORIES.map((row) => <CategoryRow key={row.name} row={row} />)}
            </tbody>
          </table>
        </div>
        <div className="flex w-4 flex-col items-center bg-[#f0f0f0]">
          <span className="flex h-[17px] items-center"><Chevron dir="up" bold /></span>
          <span className="mt-[114px] h-[93px] w-full bg-[#cdcdcd]" />
          <span className="mt-auto flex h-[17px] items-center"><Chevron dir="down" bold /></span>
        </div>
      </div>
      <div className="flex h-4 items-center bg-[#f0f0f0] pr-4">
        <span className="flex w-[17px] justify-center"><Chevron dir="left" bold /></span>
        <span className="h-full w-[620px] bg-[#cdcdcd]" />
        <span className="ml-auto flex w-[17px] justify-center"><Chevron dir="right" bold /></span>
      </div>
    </div>
  );
}

const DIALOG_TABS = [
  { label: 'Annotation Categories', width: 'w-[118px]' },
  { label: 'Analytical Model Categories', width: 'w-36' },
  { label: 'Imported Categories', width: 'w-28' },
  { label: 'Filters', width: 'w-[39px]' },
];

function VisibilityDialog() {
  return (
    <div role="dialog" aria-label="Visibility/Graphic Overrides" className="absolute top-44 left-2 w-[774px] border border-[#8a8a8a] bg-[#f0f0f0] text-[11px] leading-[13px] text-black shadow-[0_3px_12px_rgba(0,0,0,0.35)]">
      <div className="flex h-[29px] items-center justify-between bg-white pr-[9px] pl-[7px] text-[12px] text-[#999]">
        <h2>Visibility/Graphic Overrides for Structural Plan: Level 2</h2>
        <CloseX className="text-[#808080]" />
      </div>
      <div className="px-[5px] pt-[7px]">
        <div className="flex h-[21px] items-end">
          <button className="-mb-px h-[22px] w-[98px] border border-b-0 border-[#dcdcdc] bg-white pb-[2px]">Model Categories</button>
          {DIALOG_TABS.map((tab) => (
            <button key={tab.label} className={`h-[18px] border-t border-r border-[#dcdcdc] whitespace-nowrap ${tab.width}`}>{tab.label}</button>
          ))}
        </div>
        <div className="border border-[#dcdcdc] bg-white px-[15px] pt-[9px] pb-5">
          <div className="flex items-center justify-between">
            <span className="-ml-px flex items-center gap-[3px]">
              <Check id="show-model" checked large />
              <label htmlFor="show-model">Show model categories in this view</label>
            </span>
            <span>If a category is unchecked, it will not be visible.</span>
          </div>
          <div className="mt-2 flex items-center">
            <label htmlFor="filter-list" className="-ml-[2px] w-[76px]">Filter list:</label>
            <SelectBox id="filter-list" options={['Structure']} className="h-[22px] w-[105px] border-[#7a7a7a] bg-white" />
          </div>
          <CategoryTable />
          <div className="mt-2 flex justify-between">
            <div>
              <div className="flex gap-2">
                {['All', 'None', 'Invert', 'Expand All'].map((t) => (
                  <DialogButton key={t} className="h-[22px] w-[88px]">{t}</DialogButton>
                ))}
              </div>
              <div className="mt-3 ml-[2px] h-[68px] w-[380px] border border-[#dcdcdc] pt-[7px] pl-[17px]">
                <p>Categories that are not overri<br />according to Object Style sett</p>
              </div>
            </div>
            <fieldset className="mt-px h-[50px] w-[335px] border border-[#dcdcdc]">
              <legend className="ml-[6px] h-0 px-[2px]"><span className="relative -top-[7px] bg-white px-px">Override Host Layers</span></legend>
              <div className="flex justify-between px-[10px]">
                <span className="flex items-center gap-1 self-start pt-[9px]">
                  <Check id="cut-line" large />
                  <label htmlFor="cut-line">Cut Line Styles</label>
                </span>
                <DialogButton disabled className="mt-[10px] h-[22px] w-[108px]">Edit...</DialogButton>
              </div>
            </fieldset>
          </div>
        </div>
      </div>
      <div className="flex h-9 justify-end gap-2 pt-2 pr-[7px]">
        <DialogButton className="h-[21px] w-[73px]">OK</DialogButton>
        <DialogButton className="h-[21px] w-[73px]">Cancel</DialogButton>
        <DialogButton disabled className="h-[21px] w-[73px]">Apply</DialogButton>
        <DialogButton className="h-[21px] w-[73px]">Help</DialogButton>
      </div>
      <span className="absolute right-px bottom-px"><Grip /></span>
    </div>
  );
}

/* ---------- Line Graphics dialog ---------- */

function LineGraphicsDialog() {
  return (
    <div role="dialog" aria-label="Line Graphics" className="absolute top-[648px] left-[193px] w-[368px] border border-[#6a6a6a] bg-[#f0f0f0] text-[11px] leading-[13px] text-black shadow-[0_6px_18px_rgba(0,0,0,0.45)]">
      <div className="flex h-[30px] items-center justify-between bg-white pr-[9px] pb-[2px] pl-2 text-[12px]">
        <h2>Line Graphics</h2>
        <CloseX className="text-black" />
      </div>
      <div className="px-[11px] pt-[17px] pb-3">
        <div role="group" aria-labelledby="lines-title" className="h-[113px] border border-[#dcdcdc] pl-4">
          <h3 id="lines-title" className="-mt-[7px] -ml-[10px] w-[30px] bg-[#f0f0f0] pl-[2px]">Lines</h3>
          <div className="mt-[10px] flex h-[22px] items-center">
            <label htmlFor="pattern" className="w-[85px] pb-[2px]">Pattern:</label>
            <span className="relative flex h-[22px] w-[195px] items-center border border-[#7a7a7a] bg-white pl-[2px]">
              <select id="pattern" className="h-4 w-[172px] appearance-none border border-dotted border-[#222] bg-[#0078d7] pl-[2px] leading-[14px] text-white">
                <option>&lt;No Override&gt;</option>
              </select>
              <span className="pointer-events-none absolute right-[3px]"><Chevron /></span>
            </span>
            <DialogButton className="ml-[7px] h-[22px] w-[22px] font-bold">...</DialogButton>
          </div>
          <div className="mt-[9px] flex h-[21px] items-center">
            <label htmlFor="color" className="w-[86px] pb-[2px]">Color:</label>
            <button id="color" className="flex h-[21px] w-[223px] items-center border border-[#adadad] bg-[#e1e1e1] pl-px">
              <span className="h-[17px] w-[21px] border border-black bg-[#ff0000]" />
              <span className="ml-1">Red</span>
            </button>
          </div>
          <div className="mt-[9px] flex h-[21px] items-center">
            <label htmlFor="weight" className="w-[85px] pb-[2px]">Weight:</label>
            <SelectBox id="weight" options={['8']} className="h-[21px] w-[225px] border-[#adadad] bg-[#e1e1e1]" />
          </div>
        </div>
        <div className="mt-[15px] flex h-[22px] px-px">
          <DialogButton className="w-[118px]">Clear Overrides</DialogButton>
          <button className="ml-auto w-[73px] border-2 border-[#0078d7] bg-[#e1e1e1]">OK</button>
          <DialogButton className="ml-[11px] w-[73px]">Cancel</DialogButton>
        </div>
      </div>
    </div>
  );
}

export default function App() {
  return (
    <div className="relative flex h-screen flex-col overflow-hidden bg-white font-[Roboto,'Liberation_Sans',sans-serif]">
      <TitleBar />
      <RibbonTabs />
      <Ribbon />
      <div className="h-[26px] shrink-0 bg-[#eeeeee]" />
      <main className="flex min-h-0 flex-1">
        <LeftPalettes />
        <div className="flex min-w-0 flex-1 flex-col">
          <ViewTabs />
          <div className="flex min-h-0 flex-1">
            <DrawingArea />
            <div className="mt-[2px] flex w-4 flex-col items-center bg-[#f0f0f0]">
              <span className="flex h-[17px] items-center"><Chevron dir="up" bold /></span>
              <span className="flex-1" />
              <span className="h-[17px] w-full bg-[#cdcdcd]" />
              <span className="flex-1" />
              <span className="flex h-[17px] items-center"><Chevron dir="down" bold /></span>
            </div>
          </div>
          <ViewControlBar />
        </div>
      </main>
      <StatusBar />
      <div className="flex h-[5px] shrink-0 bg-[#333333] pl-12"><span className="w-[343px] bg-[#f2f2f2]" /></div>
      <VisibilityDialog />
      <LineGraphicsDialog />
    </div>
  );
}
